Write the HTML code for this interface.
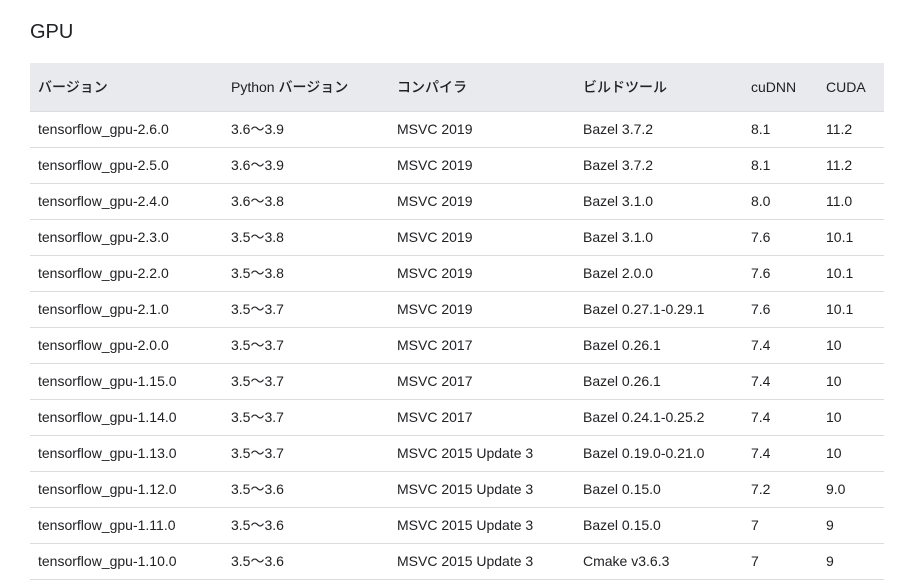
<!DOCTYPE html>
<html><head><meta charset="utf-8"><style>
body{margin:0;background:#fff;font-family:"Liberation Sans","Noto Sans CJK JP",sans-serif;color:#202124;width:910px;height:566px;overflow:hidden;position:relative}
h2{position:absolute;left:30px;top:20px;margin:0;font-weight:400;font-size:20px;line-height:24px;color:#202124}
table{position:absolute;left:30px;top:63px;width:854px;border-collapse:collapse;font-size:14px;line-height:20px}
th{background:#e8eaed;height:47px;text-align:left;font-weight:500;padding:0 0 0 8px;border-bottom:1px solid #dadce0;box-sizing:border-box}
td{height:35px;padding:0 0 0 8px;border-bottom:1px solid #dadce0}
tr:first-child{height:48px}
</style></head><body>
<h2>GPU</h2>
<table>
<colgroup><col style="width:193px"><col style="width:166px"><col style="width:186px"><col style="width:168px"><col style="width:75px"><col></colgroup>
<tr><th style="height:48px">バージョン</th><th>Python バージョン</th><th>コンパイラ</th><th>ビルドツール</th><th>cuDNN</th><th>CUDA</th></tr>
<tr><td>tensorflow_gpu-2.6.0</td><td>3.6～3.9</td><td>MSVC 2019</td><td>Bazel 3.7.2</td><td>8.1</td><td>11.2</td></tr>
<tr><td>tensorflow_gpu-2.5.0</td><td>3.6～3.9</td><td>MSVC 2019</td><td>Bazel 3.7.2</td><td>8.1</td><td>11.2</td></tr>
<tr><td>tensorflow_gpu-2.4.0</td><td>3.6～3.8</td><td>MSVC 2019</td><td>Bazel 3.1.0</td><td>8.0</td><td>11.0</td></tr>
<tr><td>tensorflow_gpu-2.3.0</td><td>3.5～3.8</td><td>MSVC 2019</td><td>Bazel 3.1.0</td><td>7.6</td><td>10.1</td></tr>
<tr><td>tensorflow_gpu-2.2.0</td><td>3.5～3.8</td><td>MSVC 2019</td><td>Bazel 2.0.0</td><td>7.6</td><td>10.1</td></tr>
<tr><td>tensorflow_gpu-2.1.0</td><td>3.5～3.7</td><td>MSVC 2019</td><td>Bazel 0.27.1-0.29.1</td><td>7.6</td><td>10.1</td></tr>
<tr><td>tensorflow_gpu-2.0.0</td><td>3.5～3.7</td><td>MSVC 2017</td><td>Bazel 0.26.1</td><td>7.4</td><td>10</td></tr>
<tr><td>tensorflow_gpu-1.15.0</td><td>3.5～3.7</td><td>MSVC 2017</td><td>Bazel 0.26.1</td><td>7.4</td><td>10</td></tr>
<tr><td>tensorflow_gpu-1.14.0</td><td>3.5～3.7</td><td>MSVC 2017</td><td>Bazel 0.24.1-0.25.2</td><td>7.4</td><td>10</td></tr>
<tr><td>tensorflow_gpu-1.13.0</td><td>3.5～3.7</td><td>MSVC 2015 Update 3</td><td>Bazel 0.19.0-0.21.0</td><td>7.4</td><td>10</td></tr>
<tr><td>tensorflow_gpu-1.12.0</td><td>3.5～3.6</td><td>MSVC 2015 Update 3</td><td>Bazel 0.15.0</td><td>7.2</td><td>9.0</td></tr>
<tr><td>tensorflow_gpu-1.11.0</td><td>3.5～3.6</td><td>MSVC 2015 Update 3</td><td>Bazel 0.15.0</td><td>7</td><td>9</td></tr>
<tr><td>tensorflow_gpu-1.10.0</td><td>3.5～3.6</td><td>MSVC 2015 Update 3</td><td>Cmake v3.6.3</td><td>7</td><td>9</td></tr>
</table>
</body></html>
